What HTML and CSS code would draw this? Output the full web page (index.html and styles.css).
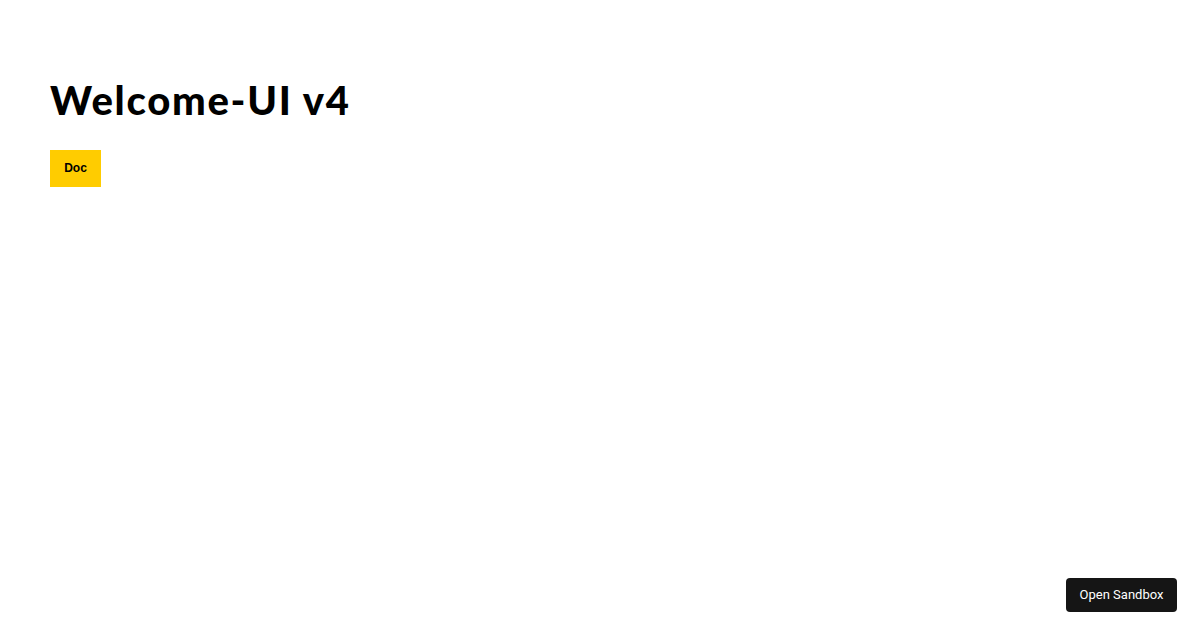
FILE: index.html
```html
<!DOCTYPE html>
<html>
<head>
<meta charset="utf-8">
<link rel="stylesheet" href="styles.css">
</head>
<body>
<main class="page">
  <h1 class="title">Welcome-UI v4</h1>
  <a class="doc-btn" href="#">Doc</a>
</main>
<a class="sandbox-btn" href="#">Open Sandbox</a>
</body>
</html>
```
FILE: styles.css
```css
html, body {
  margin: 0;
  padding: 0;
  background: #fff;
}
body {
  width: 1200px;
  height: 630px;
  font-family: "Lato", "Liberation Sans", sans-serif;
}
.page {
  padding: 72px 50px 0;
  display: flex;
  flex-direction: column;
  align-items: flex-start;
}
.title {
  margin: 0;
  font-family: "Lato", sans-serif;
  font-weight: 900;
  font-size: 40px;
  line-height: 56px;
  color: #000;
  letter-spacing: 1.7px;
}
.doc-btn {
  margin-top: 22px;
  width: 51px;
  height: 37px;
  padding-bottom: 2px;
  box-sizing: border-box;
  display: flex;
  align-items: center;
  justify-content: center;
  background: #ffcc00;
  color: #000;
  font-family: "Liberation Sans", Arial, sans-serif;
  font-weight: 700;
  font-size: 12px;
  text-decoration: none;
}
.sandbox-btn {
  position: fixed;
  right: 23px;
  bottom: 18px;
  width: 111px;
  height: 34px;
  padding-bottom: 1px;
  box-sizing: border-box;
  display: flex;
  align-items: center;
  justify-content: center;
  background: #151515;
  color: #fff;
  border-radius: 4px;
  font-family: "Roboto", "Liberation Sans", sans-serif;
  font-weight: 400;
  font-size: 13px;
  text-decoration: none;
}
```
